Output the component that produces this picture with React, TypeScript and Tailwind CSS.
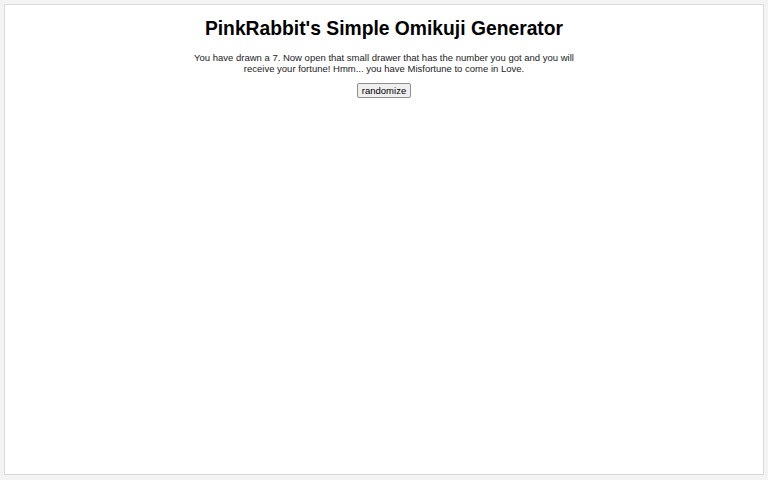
export default function App() {
  return (
    <div className="h-[480px] w-[768px] bg-[#f4f4f4] p-1 font-['Liberation_Sans',Arial,sans-serif]">
      <div className="flex h-[471px] flex-col items-center border border-[#d9d9d9] bg-white text-black">
        <h1 className="mt-[12px] text-[19.3px] font-bold leading-[24px]">
          PinkRabbit's Simple Omikuji Generator
        </h1>
        <p className="mt-[11px] w-[390px] text-center text-[9.5px] leading-[11px] text-[#222]">
          You have drawn a 7. Now open that small drawer that has the number you got and you will
          receive your fortune! Hmm... you have Misfortune to come in Love.
        </p>
        <button className="mt-[9px] h-[15px] rounded-[2px] border border-[#8f8f8f] bg-[#efefef] px-[4px] text-[9.5px] leading-[12px] text-black">
          randomize
        </button>
      </div>
    </div>
  );
}
